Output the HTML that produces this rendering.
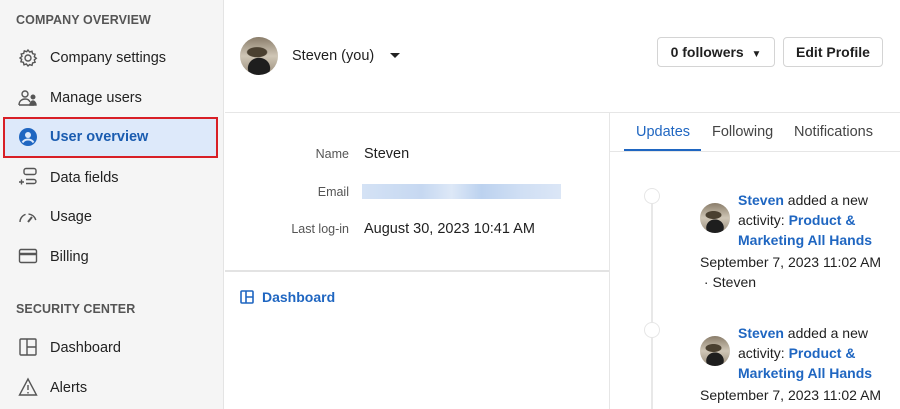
<!DOCTYPE html>
<html><head><meta charset="utf-8"><style>
*{box-sizing:border-box;margin:0;padding:0}
body{width:900px;height:409px;overflow:hidden;font-family:"Liberation Sans",sans-serif;font-size:14px;color:#1f1f1f;background:#fff;position:relative}
.a{position:absolute}
#side{left:0;top:0;width:224px;height:409px;background:#f5f5f5;border-right:1px solid #e4e4e4}
.h{left:16px;font-size:12.5px;font-weight:bold;color:#555;letter-spacing:.1px}
.it{left:50px;font-size:14.5px;color:#222}
.ic{left:18px;width:20px;height:20px}
.av{border-radius:50%;background:radial-gradient(ellipse 30% 28% at 50% 82%,#1e1e1e 0 95%,transparent 100%),radial-gradient(ellipse 28% 14% at 45% 40%,#4a4030 0 90%,transparent 100%),linear-gradient(#8a7d6a,#cfc6b6 50%,#9a8e7c);}
.btn{border:1px solid #d4d4d4;border-radius:4px;background:#fff;font-weight:bold;font-size:14px;height:30px;line-height:28px;text-align:center}
.lbl{font-size:12.5px;color:#555;text-align:right;width:125px;left:224px}
.blue{color:#1f66c1;font-weight:bold}
</style></head><body>
<div id="side" class="a">
<div class="a h" style="top:13px">COMPANY OVERVIEW</div>
<svg class="a ic" style="top:48px" viewBox="0 0 20 20" fill="none" stroke="#555" stroke-width="1.4"><circle cx="10" cy="10" r="3"/><path d="M10 2l1.6 2 2.4-.8.6 2.5 2.5.6-.8 2.4 2 1.6-2 1.6.8 2.4-2.5.6-.6 2.5-2.4-.8L10 18l-1.6-2-2.4.8-.6-2.5-2.5-.6.8-2.4L2 10l2-1.6-.8-2.4 2.5-.6.6-2.5 2.4.8z"/></svg>
<div class="a it" style="top:50px">Company settings</div>
<svg class="a ic" style="top:88px" viewBox="0 0 20 20" fill="none" stroke="#555" stroke-width="1.4"><circle cx="7" cy="6" r="3"/><path d="M1 17c0-4 3-6 6-6s4 1 5 3M1 17h15"/><circle cx="15" cy="9" r="1.8" fill="#555"/><path d="M12 17c0-2 1.5-4 3-4s3 2 3 4z" fill="#555"/></svg>
<div class="a it" style="top:90px">Manage users</div>
<div class="a" style="left:3px;top:117px;width:215px;height:41px;background:#dde9fa;border:2px solid #d81f26"></div>
<svg class="a ic" style="top:127px" viewBox="0 0 20 20"><circle cx="10" cy="10" r="9" fill="#1f66c1"/><circle cx="10" cy="8" r="3" fill="#dde9fa"/><path d="M4.5 15.5c1.5-2.5 3.5-3 5.5-3s4 .5 5.5 3" stroke="#dde9fa" stroke-width="2" fill="none"/></svg>
<div class="a it blue" style="top:129px;color:#1a5cb0">User overview</div>
<svg class="a ic" style="top:167px" viewBox="0 0 20 20" fill="none" stroke="#555" stroke-width="1.4"><rect x="6" y="1.5" width="12" height="6" rx="2"/><path d="M8 12.5h8a2 2 0 010 4H8M1 15h5M3.5 12.5v5"/></svg>
<div class="a it" style="top:170px">Data fields</div>
<svg class="a ic" style="top:207px" viewBox="0 0 20 20" fill="none" stroke="#555" stroke-width="1.4"><path d="M2 15a8 8 0 0116 0" stroke-dasharray="10 3"/><path d="M10 15l4-5" stroke-width="2"/></svg>
<div class="a it" style="top:209px">Usage</div>
<svg class="a ic" style="top:246px" viewBox="0 0 20 20" fill="none" stroke="#555" stroke-width="1.4"><rect x="1.5" y="3.5" width="17" height="13" rx="1.5"/><path d="M1.5 8h17" stroke-width="2.5"/></svg>
<div class="a it" style="top:249px">Billing</div>
<div class="a h" style="top:302px">SECURITY CENTER</div>
<svg class="a ic" style="top:337px" viewBox="0 0 20 20" fill="none" stroke="#555" stroke-width="1.4"><rect x="2" y="2" width="16" height="16" rx="1"/><path d="M9 2v16M9 10h9"/></svg>
<div class="a it" style="top:340px">Dashboard</div>
<svg class="a ic" style="top:377px" viewBox="0 0 20 20" fill="none" stroke="#555" stroke-width="1.4"><path d="M10 2L1.5 18h17z"/><path d="M10 8v5M10 15v1.5"/></svg>
<div class="a it" style="top:380px">Alerts</div>
</div>

<div class="a av" style="left:240px;top:37px;width:38px;height:38px"></div>
<div class="a" style="left:292px;top:48px;font-size:14.5px">Steven (you)</div>
<div class="a" style="left:390px;top:53px;border:5px solid transparent;border-top:5px solid #222;border-bottom:0"></div>
<div class="a btn" style="left:657px;top:37px;width:118px">0 followers &nbsp;<span style="font-size:10px">&#9660;</span></div>
<div class="a btn" style="left:783px;top:37px;width:100px">Edit Profile</div>
<div class="a" style="left:225px;top:112px;width:675px;height:1px;background:#e6e6e6"></div>
<div class="a" style="left:609px;top:113px;width:1px;height:296px;background:#e6e6e6"></div>

<div class="a lbl" style="top:147px">Name</div>
<div class="a" style="left:364px;top:146px;font-size:14.5px">Steven</div>
<div class="a lbl" style="top:185px">Email</div>
<div class="a" style="left:362px;top:184px;width:199px;height:15px;background:linear-gradient(90deg,#d4e2f5,#c6d8f1 30%,#dde8f7 45%,#bcd2ef 60%,#d0dff4 80%,#dbe6f6)"></div>
<div class="a lbl" style="top:222px">Last log-in</div>
<div class="a" style="left:364px;top:221px;font-size:14.5px">August 30, 2023 10:41 AM</div>
<div class="a" style="left:225px;top:270px;width:384px;height:2px;background:#e3e3e3"></div>
<svg class="a" style="left:240px;top:290px" width="14" height="14" viewBox="0 0 14 14" fill="none" stroke="#1f66c1" stroke-width="1.6"><rect x="1" y="1" width="12" height="12" rx="1"/><path d="M6 1v12M6 7h7"/></svg>
<div class="a blue" style="left:262px;top:289px;font-size:14px">Dashboard</div>

<div class="a" style="left:636px;top:124px;color:#1f66c1;font-size:14.5px">Updates</div>
<div class="a" style="left:712px;top:124px;color:#444;font-size:14.5px">Following</div>
<div class="a" style="left:794px;top:124px;color:#444;font-size:14.5px">Notifications</div>
<div class="a" style="left:610px;top:151px;width:290px;height:1px;background:#e6e6e6"></div>
<div class="a" style="left:624px;top:149px;width:77px;height:2px;background:#1f66c1"></div>

<div class="a" style="left:651px;top:195px;width:2px;height:214px;background:#e8e8e8"></div>
<div class="a" style="left:644px;top:188px;width:16px;height:16px;border-radius:50%;background:#fff;border:1px solid #e6e6e6"></div>
<div class="a" style="left:644px;top:322px;width:16px;height:16px;border-radius:50%;background:#fff;border:1px solid #e6e6e6"></div>

<div class="a av" style="left:700px;top:203px;width:30px;height:30px"></div>
<div class="a" style="left:738px;top:190px;line-height:20px;font-size:14px;width:160px"><span class="blue">Steven</span> added a new activity: <span class="blue">Product &amp; Marketing All Hands</span></div>
<div class="a" style="left:700px;top:252px;line-height:20px;font-size:14px">September 7, 2023 11:02 AM<br>&nbsp;· Steven</div>
<div class="a av" style="left:700px;top:336px;width:30px;height:30px"></div>
<div class="a" style="left:738px;top:323px;line-height:20px;font-size:14px;width:160px"><span class="blue">Steven</span> added a new activity: <span class="blue">Product &amp; Marketing All Hands</span></div>
<div class="a" style="left:700px;top:385px;line-height:20px;font-size:14px">September 7, 2023 11:02 AM</div>
</body></html>
